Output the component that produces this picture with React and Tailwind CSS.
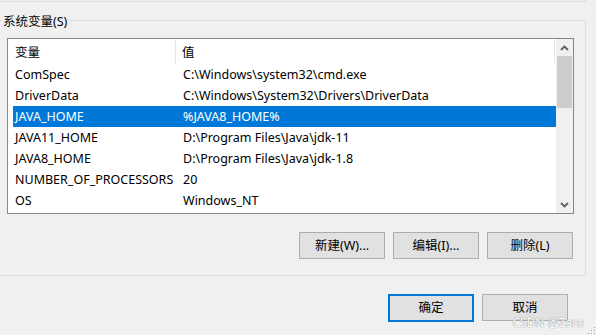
import React from "react";

const rows = [
  ["ComSpec", "C:\\Windows\\system32\\cmd.exe"],
  ["DriverData", "C:\\Windows\\System32\\Drivers\\DriverData"],
  ["JAVA_HOME", "%JAVA8_HOME%", true],
  ["JAVA11_HOME", "D:\\Program Files\\Java\\jdk-11"],
  ["JAVA8_HOME", "D:\\Program Files\\Java\\jdk-1.8"],
  ["NUMBER_OF_PROCESSORS", "20"],
  ["OS", "Windows_NT"],
];

function Chevron({ up }) {
  return (
    <svg width="9" height="6" viewBox="0 0 9 6">
      <path
        d={up ? "M1 5 L4.5 1.5 L8 5" : "M1 1 L4.5 4.5 L8 1"}
        fill="none"
        stroke="#606060"
        strokeWidth="1.8"
      />
    </svg>
  );
}

function Btn({ children, primary }) {
  return (
    <div
      className={
        "flex items-center justify-center pt-px w-[86px] bg-[#e1e1e1] text-[12.5px] text-black " +
        (primary ? "h-[28px] border-2 border-[#0078d7]" : "h-[27px] border border-[#adadad]")
      }
    >
      {children}
    </div>
  );
}

export default function App() {
  return (
    <div
      className="relative w-[596px] h-[335px] overflow-hidden bg-[#f0f0f0] text-black"
      style={{ fontFamily: '"Noto Sans", "Noto Sans CJK SC", sans-serif' }}
    >
      <div className="w-[586px] h-[2px] border-b border-r border-[#dcdcdc]" />

      <div className="relative mt-[18px] w-[586px] h-[256px] border-t border-r border-b border-[#dcdcdc]">
        <div className="absolute left-[2px] top-[-8px] px-px bg-[#f0f0f0] text-[12.5px] leading-[18px]">
          系统变量(S)
        </div>

        <div className="ml-[7px] mt-[17px] w-[567px] h-[176px] border border-[#828790] bg-white flex">
          <div className="w-[548px] h-full overflow-hidden flex flex-col">
            <div className="flex h-[25px] shrink-0 items-center text-[12.5px]">
              <div className="w-[168px] h-[23px] pl-[7px] pt-[3px] flex items-center border-r border-[#e5e5e5]">
                变量
              </div>
              <div className="flex-1 h-[23px] pl-[6px] pt-[3px] flex items-center border-r border-[#e5e5e5] mr-px">
                值
              </div>
            </div>
            {rows.map(([k, v, sel]) => (
              <div
                key={k}
                className={
                  "ml-[5px] w-[543px] h-[21px] shrink-0 flex items-center pt-[2px] text-[12.5px] whitespace-nowrap " +
                  (sel ? "bg-[#0078d7] text-white" : "")
                }
              >
                <div className="w-[168px] pl-[2px]">{k}</div>
                <div className="pl-[2px]">{v}</div>
              </div>
            ))}
          </div>
          <div className="w-[17px] h-full bg-[#f0f0f0] flex flex-col items-center">
            <div className="h-[17px] w-full flex items-center justify-center">
              <Chevron up />
            </div>
            <div className="w-[15px] h-[52px] bg-[#cdcdcd]" />
            <div className="flex-1" />
            <div className="h-[17px] w-full flex items-center justify-center">
              <Chevron />
            </div>
          </div>
        </div>

        <div className="mt-[18px] mr-[12px] flex justify-end gap-[8px]">
          <Btn>新建(W)...</Btn>
          <Btn>编辑(I)...</Btn>
          <Btn>删除(L)</Btn>
        </div>
      </div>

      <div className="mt-[18px] mr-[28px] flex justify-end gap-[8px] items-start">
        <Btn primary>确定</Btn>
        <Btn>取消</Btn>
      </div>

      <div
        className="absolute right-[12px] bottom-[3px] text-[12px] text-white"
        style={{ textShadow: "0 0 1px #909090, 0 0 1px #909090" }}
      >
        CSDN @Zero
      </div>
      <svg className="absolute right-0 bottom-0" width="9" height="9" viewBox="0 0 9 9">
        <g fill="#a0a0a0">
          <rect x="7" y="1" width="1" height="1" />
          <rect x="4" y="4" width="1" height="1" />
          <rect x="7" y="4" width="1" height="1" />
          <rect x="1" y="7" width="1" height="1" />
          <rect x="4" y="7" width="1" height="1" />
          <rect x="7" y="7" width="1" height="1" />
        </g>
      </svg>
    </div>
  );
}
